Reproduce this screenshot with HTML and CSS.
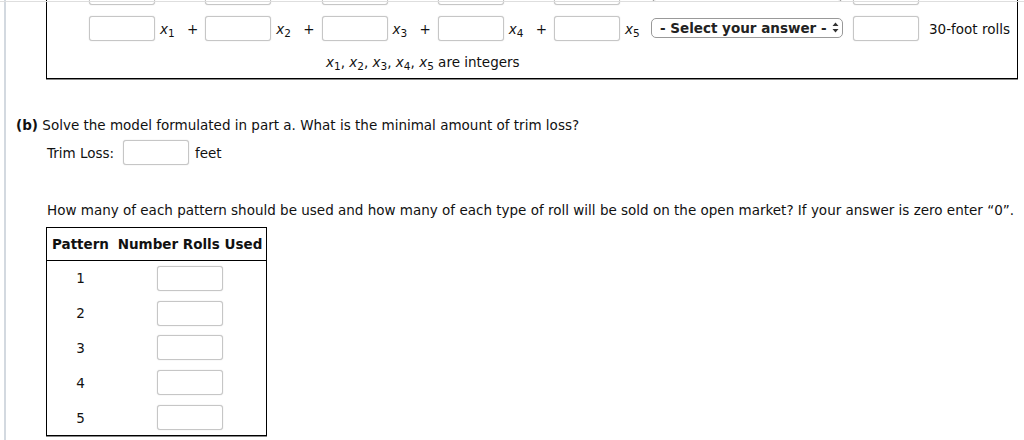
FILE: index.html
```html
<!DOCTYPE html>
<html>
<head>
<meta charset="utf-8">
<link rel="stylesheet" href="styles.css">
</head>
<body>
<div class="topline"></div>
<div class="page">
  <div class="box">
    <div class="row">
      <div class="term"><span class="inp"></span></div>
      <div class="term"><span class="inp"></span></div>
      <div class="term"><span class="inp"></span></div>
      <div class="term"><span class="inp"></span></div>
      <div class="term last"><span class="inp"></span></div>
      <span class="select"></span>
      <span class="inp rhs"></span>
    </div>
    <div class="row">
      <div class="term"><span class="inp"></span><span class="var">x<sub>1</sub></span><span class="plus">+</span></div>
      <div class="term"><span class="inp"></span><span class="var">x<sub>2</sub></span><span class="plus">+</span></div>
      <div class="term"><span class="inp"></span><span class="var">x<sub>3</sub></span><span class="plus">+</span></div>
      <div class="term"><span class="inp"></span><span class="var">x<sub>4</sub></span><span class="plus">+</span></div>
      <div class="term last"><span class="inp"></span><span class="var">x<sub>5</sub></span></div>
      <span class="select">- Select your answer -<svg class="arr" width="7" height="11" viewBox="0 0 7 11"><path d="M3.5 0.5 L6.5 4 L0.5 4 Z M3.5 10.5 L6.5 7 L0.5 7 Z" fill="#333"/></svg></span>
      <span class="inp rhs"></span><span class="unit">30-foot rolls</span>
    </div>
    <div class="integers"><i>x</i><sub>1</sub>, <i>x</i><sub>2</sub>, <i>x</i><sub>3</sub>, <i>x</i><sub>4</sub>, <i>x</i><sub>5</sub> are integers</div>
  </div>

  <p class="question"><b>(b)</b> Solve the model formulated in part a. What is the minimal amount of trim loss?</p>
  <div class="trim"><span class="label">Trim Loss:</span><span class="inp"></span><span class="feet">feet</span></div>

  <p class="how">How many of each pattern should be used and how many of each type of roll will be sold on the open market? If your answer is zero enter “0”.</p>

  <table class="patterns">
    <thead>
      <tr><th class="c1">Pattern</th><th class="c2">Number Rolls Used</th></tr>
    </thead>
    <tbody>
      <tr><td class="c1">1</td><td class="c2"><span class="inp"></span></td></tr>
      <tr><td class="c1">2</td><td class="c2"><span class="inp"></span></td></tr>
      <tr><td class="c1">3</td><td class="c2"><span class="inp"></span></td></tr>
      <tr><td class="c1">4</td><td class="c2"><span class="inp"></span></td></tr>
      <tr><td class="c1">5</td><td class="c2"><span class="inp"></span></td></tr>
    </tbody>
  </table>
</div>
</body>
</html>
```

FILE: styles.css
```css
html, body {
  margin: 0;
  padding: 0;
  background: #fff;
}
body {
  font-family: "DejaVu Sans", Verdana, sans-serif;
  font-size: 13.5px;
  line-height: 16px;
  color: #111;
  overflow: hidden;
  height: 440px;
}
.topline {
  position: absolute;
  left: 0;
  right: 0;
  top: 1px;
  height: 1px;
  background: #dedede;
  z-index: 2;
}
.page {
  margin-left: 4px;
  border-left: 2px solid #d3d9e0;
  min-height: 440px;
  display: flow-root;
}
.inp {
  display: inline-block;
  box-sizing: border-box;
  width: 66px;
  height: 25px;
  border: 1px solid #c6c6c6;
  border-radius: 3px;
  box-shadow: 0 0 1px rgba(0,0,0,0.25);
  background: #fff;
  flex: none;
}
.box {
  margin: -41px 0 0 40px;
  width: 972px;
  box-sizing: border-box;
  border: 1px solid #000;
  box-shadow: 0 1px 0 #888;
  padding: 20px 0 8px 42px;
}
.row {
  display: flex;
  align-items: center;
  height: 25px;
  margin-bottom: 11px;
}
.term {
  display: flex;
  align-items: center;
  width: 116.25px;
  flex: none;
}
.term.last {
  width: 97px;
}
.var {
  font-style: italic;
  margin-left: 5px;
  width: 27px;
  white-space: nowrap;
}
.var sub, .integers sub {
  font-style: normal;
  font-size: 10.5px;
  line-height: 0;
  vertical-align: -3px;
}
.select {
  display: inline-flex;
  align-items: center;
  box-sizing: border-box;
  width: 192px;
  height: 20px;
  border: 1px solid #999;
  border-radius: 5px;
  padding-left: 8px;
  font-weight: bold;
  color: #222;
  margin-top: -2px;
  flex: none;
  white-space: nowrap;
}
.arr {
  margin-left: 5px;
}
.rhs {
  margin-left: 10px;
}
.unit {
  margin-left: 10px;
  white-space: nowrap;
}
.integers {
  height: 16px;
  padding: 2px 0 0 237px;
}
.question {
  margin: 38px 0 0 10px;
}
.trim {
  display: flex;
  align-items: center;
  margin: 7px 0 0 41px;
  height: 25px;
}
.trim .label {
  width: 76px;
  flex: none;
}
.trim .feet {
  margin-left: 6px;
}
.how {
  margin: 37px 0 0 41px;
  white-space: nowrap;
}
.patterns {
  margin: 9px 0 0 40px;
  border-collapse: collapse;
  border: 1px solid #000;
  box-shadow: 0 1px 0 #888;
  width: 221px;
}
.patterns th {
  font-weight: bold;
  height: 32px;
  padding: 0;
  border-bottom: 1px solid #000;
  text-align: center;
  white-space: nowrap;
}
.patterns th.c1 {
  width: 67px;
}
.patterns td {
  height: 34.8px;
  padding: 0;
  text-align: center;
  vertical-align: middle;
}
.patterns td .inp {
  vertical-align: middle;
}
```
